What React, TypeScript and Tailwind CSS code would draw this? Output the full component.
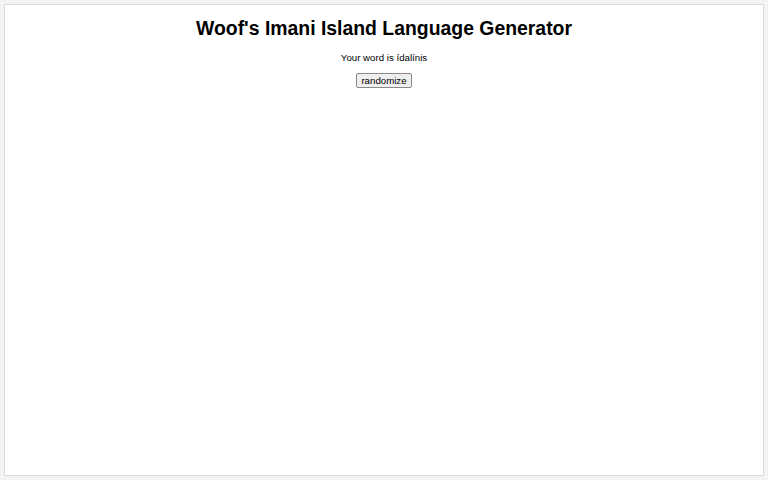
import React, { useState } from 'react';

const SYLLABLES = ['í', 'da', 'lí', 'nis', 'ka', 'mo', 'ru', 'é', 'sa', 'ti'];

function makeWord(): string {
  const n = 3 + Math.floor(Math.random() * 2);
  let w = '';
  for (let i = 0; i < n; i++) w += SYLLABLES[Math.floor(Math.random() * SYLLABLES.length)];
  return w;
}

const App: React.FC = () => {
  const [word, setWord] = useState('ídalínis');

  return (
    <div className="h-[480px] w-[768px] bg-[#f3f3f3] p-[4px] font-['Liberation_Sans',Arial,sans-serif] text-black">
      <div className="flex h-full flex-col items-center border border-[#dcdcdc] bg-white">
        <h1 className="mt-[11px] text-[19.4px] font-bold leading-[24px]">Woof's Imani Island Language Generator</h1>
        <p className="mt-[12px] text-[9.7px] leading-[12px]">Your word is {word}</p>
        <button
          type="button"
          onClick={() => setWord(makeWord())}
          className="mt-[9px] h-[15px] rounded-[2px] border border-[#8a8a8a] bg-[#efefef] px-[4px] text-[9.7px] leading-[12px]"
        >
          randomize
        </button>
      </div>
    </div>
  );
};

export default App;
